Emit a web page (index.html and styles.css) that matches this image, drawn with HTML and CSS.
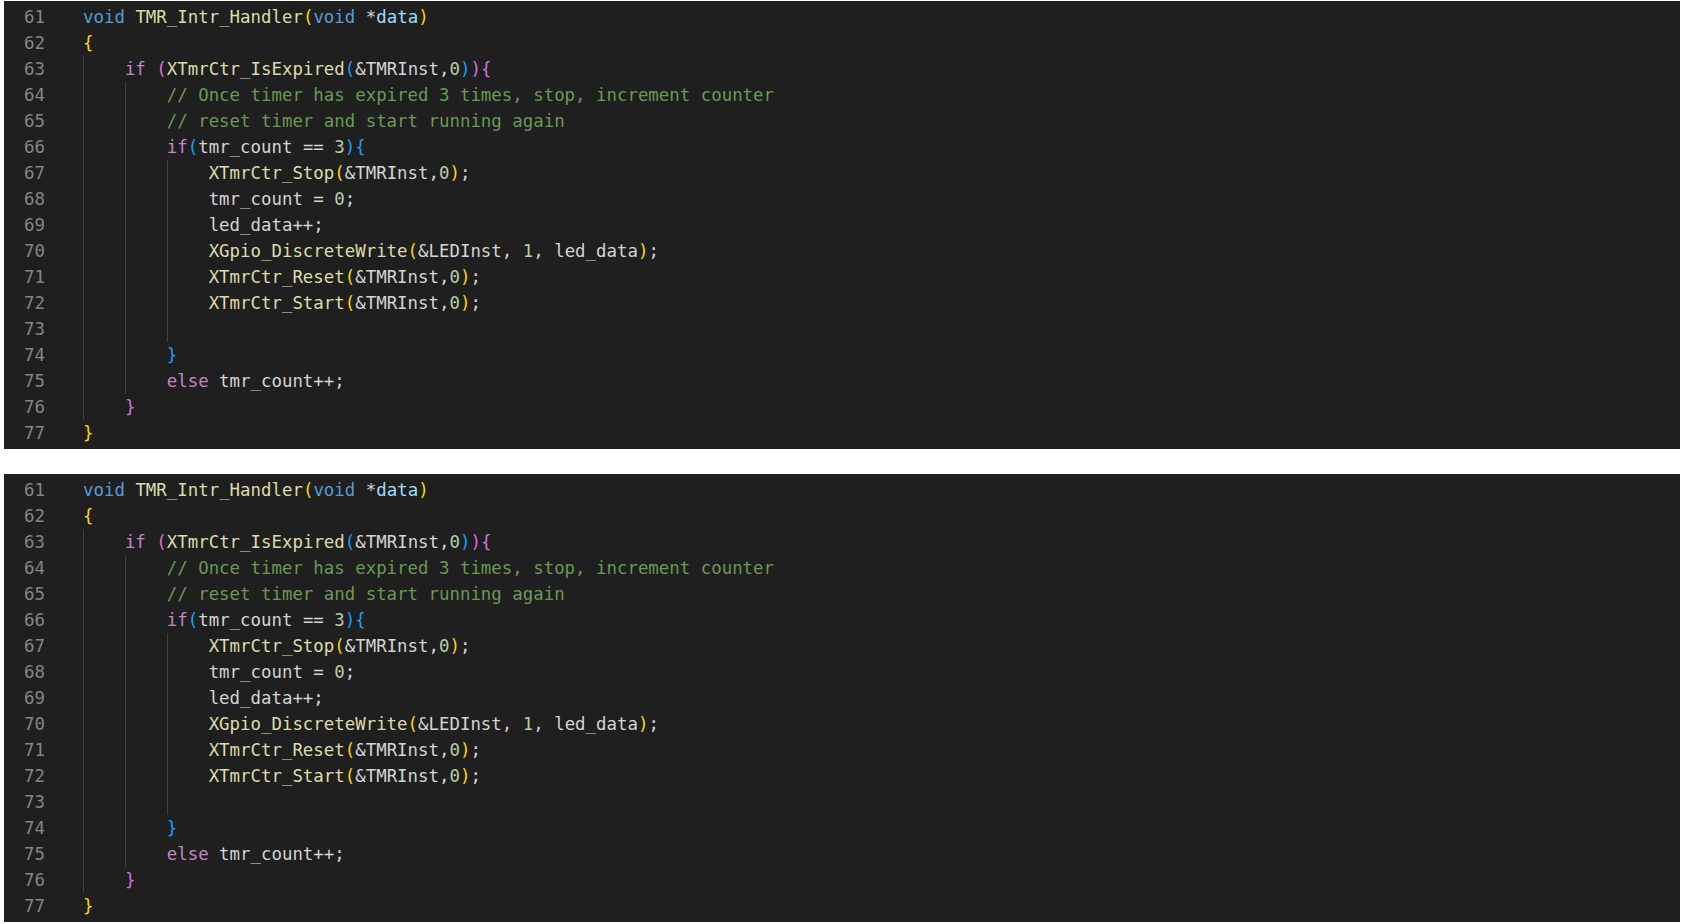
FILE: index.html
```html
<!DOCTYPE html>
<html>
<head>
<meta charset="utf-8">
<link rel="stylesheet" href="styles.css">
</head>
<body>
<div class="page">
  <div class="editor">
    <div class="line"><span class="ln">61</span><span class="code"><span class="t"><span class="kw">void</span> <span class="fn">TMR_Intr_Handler</span><span class="b1">(</span><span class="kw">void</span> *<span class="pm">data</span><span class="b1">)</span></span></span></div>
    <div class="line"><span class="ln">62</span><span class="code"><span class="t"><span class="b1">{</span></span></span></div>
    <div class="line"><span class="ln">63</span><span class="code"><i class="g"></i><span class="t"><span class="ctl">if</span> <span class="b2">(</span><span class="fn">XTmrCtr_IsExpired</span><span class="b3">(</span>&amp;TMRInst,<span class="num">0</span><span class="b3">)</span><span class="b2">)</span><span class="b2">{</span></span></span></div>
    <div class="line"><span class="ln">64</span><span class="code"><i class="g"></i><i class="g"></i><span class="t"><span class="cm">// Once timer has expired 3 times, stop, increment counter</span></span></span></div>
    <div class="line"><span class="ln">65</span><span class="code"><i class="g"></i><i class="g"></i><span class="t"><span class="cm">// reset timer and start running again</span></span></span></div>
    <div class="line"><span class="ln">66</span><span class="code"><i class="g"></i><i class="g"></i><span class="t"><span class="ctl">if</span><span class="b3">(</span>tmr_count == <span class="num">3</span><span class="b3">)</span><span class="b3">{</span></span></span></div>
    <div class="line"><span class="ln">67</span><span class="code"><i class="g"></i><i class="g"></i><i class="g"></i><span class="t"><span class="fn">XTmrCtr_Stop</span><span class="b1">(</span>&amp;TMRInst,<span class="num">0</span><span class="b1">)</span>;</span></span></div>
    <div class="line"><span class="ln">68</span><span class="code"><i class="g"></i><i class="g"></i><i class="g"></i><span class="t">tmr_count = <span class="num">0</span>;</span></span></div>
    <div class="line"><span class="ln">69</span><span class="code"><i class="g"></i><i class="g"></i><i class="g"></i><span class="t">led_data++;</span></span></div>
    <div class="line"><span class="ln">70</span><span class="code"><i class="g"></i><i class="g"></i><i class="g"></i><span class="t"><span class="fn">XGpio_DiscreteWrite</span><span class="b1">(</span>&amp;LEDInst, <span class="num">1</span>, led_data<span class="b1">)</span>;</span></span></div>
    <div class="line"><span class="ln">71</span><span class="code"><i class="g"></i><i class="g"></i><i class="g"></i><span class="t"><span class="fn">XTmrCtr_Reset</span><span class="b1">(</span>&amp;TMRInst,<span class="num">0</span><span class="b1">)</span>;</span></span></div>
    <div class="line"><span class="ln">72</span><span class="code"><i class="g"></i><i class="g"></i><i class="g"></i><span class="t"><span class="fn">XTmrCtr_Start</span><span class="b1">(</span>&amp;TMRInst,<span class="num">0</span><span class="b1">)</span>;</span></span></div>
    <div class="line"><span class="ln">73</span><span class="code"><i class="g"></i><i class="g"></i><i class="g"></i><span class="t"></span></span></div>
    <div class="line"><span class="ln">74</span><span class="code"><i class="g"></i><i class="g"></i><span class="t"><span class="b3">}</span></span></span></div>
    <div class="line"><span class="ln">75</span><span class="code"><i class="g"></i><i class="g"></i><span class="t"><span class="ctl">else</span> tmr_count++;</span></span></div>
    <div class="line"><span class="ln">76</span><span class="code"><i class="g"></i><span class="t"><span class="b2">}</span></span></span></div>
    <div class="line"><span class="ln">77</span><span class="code"><span class="t"><span class="b1">}</span></span></span></div>
  </div>
  <div class="editor">
    <div class="line"><span class="ln">61</span><span class="code"><span class="t"><span class="kw">void</span> <span class="fn">TMR_Intr_Handler</span><span class="b1">(</span><span class="kw">void</span> *<span class="pm">data</span><span class="b1">)</span></span></span></div>
    <div class="line"><span class="ln">62</span><span class="code"><span class="t"><span class="b1">{</span></span></span></div>
    <div class="line"><span class="ln">63</span><span class="code"><i class="g"></i><span class="t"><span class="ctl">if</span> <span class="b2">(</span><span class="fn">XTmrCtr_IsExpired</span><span class="b3">(</span>&amp;TMRInst,<span class="num">0</span><span class="b3">)</span><span class="b2">)</span><span class="b2">{</span></span></span></div>
    <div class="line"><span class="ln">64</span><span class="code"><i class="g"></i><i class="g"></i><span class="t"><span class="cm">// Once timer has expired 3 times, stop, increment counter</span></span></span></div>
    <div class="line"><span class="ln">65</span><span class="code"><i class="g"></i><i class="g"></i><span class="t"><span class="cm">// reset timer and start running again</span></span></span></div>
    <div class="line"><span class="ln">66</span><span class="code"><i class="g"></i><i class="g"></i><span class="t"><span class="ctl">if</span><span class="b3">(</span>tmr_count == <span class="num">3</span><span class="b3">)</span><span class="b3">{</span></span></span></div>
    <div class="line"><span class="ln">67</span><span class="code"><i class="g"></i><i class="g"></i><i class="g"></i><span class="t"><span class="fn">XTmrCtr_Stop</span><span class="b1">(</span>&amp;TMRInst,<span class="num">0</span><span class="b1">)</span>;</span></span></div>
    <div class="line"><span class="ln">68</span><span class="code"><i class="g"></i><i class="g"></i><i class="g"></i><span class="t">tmr_count = <span class="num">0</span>;</span></span></div>
    <div class="line"><span class="ln">69</span><span class="code"><i class="g"></i><i class="g"></i><i class="g"></i><span class="t">led_data++;</span></span></div>
    <div class="line"><span class="ln">70</span><span class="code"><i class="g"></i><i class="g"></i><i class="g"></i><span class="t"><span class="fn">XGpio_DiscreteWrite</span><span class="b1">(</span>&amp;LEDInst, <span class="num">1</span>, led_data<span class="b1">)</span>;</span></span></div>
    <div class="line"><span class="ln">71</span><span class="code"><i class="g"></i><i class="g"></i><i class="g"></i><span class="t"><span class="fn">XTmrCtr_Reset</span><span class="b1">(</span>&amp;TMRInst,<span class="num">0</span><span class="b1">)</span>;</span></span></div>
    <div class="line"><span class="ln">72</span><span class="code"><i class="g"></i><i class="g"></i><i class="g"></i><span class="t"><span class="fn">XTmrCtr_Start</span><span class="b1">(</span>&amp;TMRInst,<span class="num">0</span><span class="b1">)</span>;</span></span></div>
    <div class="line"><span class="ln">73</span><span class="code"><i class="g"></i><i class="g"></i><i class="g"></i><span class="t"></span></span></div>
    <div class="line"><span class="ln">74</span><span class="code"><i class="g"></i><i class="g"></i><span class="t"><span class="b3">}</span></span></span></div>
    <div class="line"><span class="ln">75</span><span class="code"><i class="g"></i><i class="g"></i><span class="t"><span class="ctl">else</span> tmr_count++;</span></span></div>
    <div class="line"><span class="ln">76</span><span class="code"><i class="g"></i><span class="t"><span class="b2">}</span></span></span></div>
    <div class="line"><span class="ln">77</span><span class="code"><span class="t"><span class="b1">}</span></span></span></div>
  </div>
</div>
</body>
</html>
```

FILE: styles.css
```css
html, body {
  margin: 0;
  padding: 0;
  background: #ffffff;
}

.page {
  padding: 1px 2px 0 4px;
  display: flex;
  flex-direction: column;
  gap: 25px;
}

.editor {
  background: #1f1f1f;
  padding: 3px 0;
  font-family: "DejaVu Sans Mono", "Liberation Mono", monospace;
  font-size: 17.4px;
  color: #d4d4d4;
}

.line {
  display: flex;
  height: 26px;
  line-height: 26px;
}

.ln {
  width: 41px;
  flex: none;
  text-align: right;
  color: #858585;
}

.code {
  display: flex;
  margin-left: 38px;
}

.g {
  display: block;
  width: 4ch;
  height: 26px;
  box-sizing: border-box;
  border-left: 1px solid #404040;
}

.t {
  white-space: pre;
}

.kw { color: #569cd6; }
.ctl { color: #c586c0; }
.fn { color: #dcdcaa; }
.pm { color: #9cdcfe; }
.num { color: #b5cea8; }
.cm { color: #6a9955; }
.b1 { color: #ffd700; }
.b2 { color: #da70d6; }
.b3 { color: #179fff; }
```
